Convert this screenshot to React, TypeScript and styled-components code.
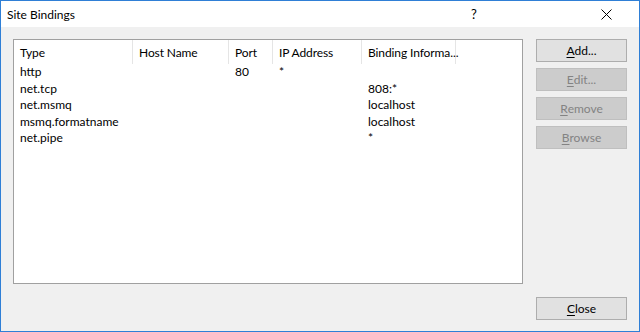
import styled, { createGlobalStyle } from 'styled-components'

const GlobalStyle = createGlobalStyle`
  html, body {
    margin: 0;
    padding: 0;
    background: #ffffff;
  }
  body {
    font-family: "Segoe UI", Lato, "Noto Sans", sans-serif;
    font-size: 12px;
    color: #000000;
  }
`

interface Column {
  title: string
  width: number
}

const columns: Column[] = [
  { title: 'Type', width: 119 },
  { title: 'Host Name', width: 96 },
  { title: 'Port', width: 44 },
  { title: 'IP Address', width: 89 },
  { title: 'Binding Informa...', width: 94 },
]

const rows: string[][] = [
  ['http', '', '80', '*', ''],
  ['net.tcp', '', '', '', '808:*'],
  ['net.msmq', '', '', '', 'localhost'],
  ['msmq.formatname', '', '', '', 'localhost'],
  ['net.pipe', '', '', '', '*'],
]

const Window = styled.div`
  width: 640px;
  height: 332px;
  box-sizing: border-box;
  border: 1px solid #2f7fd6;
  display: flex;
  flex-direction: column;
  background: #f0f0f0;
`

const TitleBar = styled.div`
  height: 26px;
  flex: none;
  background: #ffffff;
  display: flex;
  align-items: center;
  padding-left: 6px;
`

const Title = styled.div`
  flex: 1;
  font-size: 12px;
  color: #000000;
`

const HelpButton = styled.div`
  width: 46px;
  height: 26px;
  display: flex;
  align-items: center;
  justify-content: center;
  font-size: 13px;
  color: #000000;
  margin-right: 86px;
`

const CloseButton = styled.div`
  width: 46px;
  height: 26px;
  display: flex;
  align-items: center;
  justify-content: center;
  margin-right: 10px;
`

const Body = styled.div`
  flex: 1;
  display: grid;
  grid-template-columns: 1fr 91px;
  grid-template-rows: 1fr 23px;
  column-gap: 13px;
  row-gap: 13px;
  padding: 12px 12px 11px 12px;
`

const ListView = styled.div`
  background: #ffffff;
  border: 1px solid #a0a0a0;
  overflow: hidden;
`

const HeaderRow = styled.div`
  display: flex;
  height: 24px;
`

const HeaderCell = styled.div<{ $width: number }>`
  width: ${(p) => p.$width}px;
  box-sizing: border-box;
  padding-left: 6px;
  display: flex;
  align-items: center;
  border-right: 1px solid #e5e5e5;
  white-space: nowrap;
  letter-spacing: -0.1px;
`

const DataRow = styled.div`
  display: flex;
  height: 16.5px;
  align-items: center;
`

const DataCell = styled.div<{ $width: number }>`
  width: ${(p) => p.$width}px;
  box-sizing: border-box;
  padding-left: 6px;
  white-space: nowrap;
  line-height: 16px;
`

const SideButtons = styled.div`
  display: flex;
  flex-direction: column;
  gap: 6px;
`

const Button = styled.button<{ $disabled?: boolean }>`
  width: 91px;
  height: 23px;
  box-sizing: border-box;
  padding: 0;
  margin: 0;
  font-family: inherit;
  font-size: 12px;
  background: ${(p) => (p.$disabled ? '#cccccc' : '#e1e1e1')};
  border: 1px solid ${(p) => (p.$disabled ? '#bfbfbf' : '#adadad')};
  color: ${(p) => (p.$disabled ? '#838383' : '#000000')};
  display: flex;
  align-items: center;
  justify-content: center;
`

const Key = styled.span`
  text-decoration: underline;
  text-underline-offset: 2px;
`

const Footer = styled.div`
  grid-column: 2;
`

const AccessButton = ({ label, disabled }: { label: string; disabled?: boolean }) => (
  <Button $disabled={disabled}>
    <Key>{label[0]}</Key>
    {label.slice(1)}
  </Button>
)

export default function App() {
  return (
    <>
      <GlobalStyle />
      <Window>
        <TitleBar>
          <Title>Site Bindings</Title>
          <HelpButton>?</HelpButton>
          <CloseButton>
            <svg width="11" height="11" viewBox="0 0 11 11">
              <path d="M0.5 0.5 L10.5 10.5 M10.5 0.5 L0.5 10.5" stroke="#000" strokeWidth="1" />
            </svg>
          </CloseButton>
        </TitleBar>
        <Body>
          <ListView>
            <HeaderRow>
              {columns.map((c) => (
                <HeaderCell key={c.title} $width={c.width}>
                  {c.title}
                </HeaderCell>
              ))}
            </HeaderRow>
            {rows.map((r) => (
              <DataRow key={r[0]}>
                {r.map((v, i) => (
                  <DataCell key={i} $width={columns[i].width}>
                    {v}
                  </DataCell>
                ))}
              </DataRow>
            ))}
          </ListView>
          <SideButtons>
            <AccessButton label="Add..." />
            <AccessButton label="Edit..." disabled />
            <AccessButton label="Remove" disabled />
            <AccessButton label="Browse" disabled />
          </SideButtons>
          <Footer>
            <AccessButton label="Close" />
          </Footer>
        </Body>
      </Window>
    </>
  )
}
